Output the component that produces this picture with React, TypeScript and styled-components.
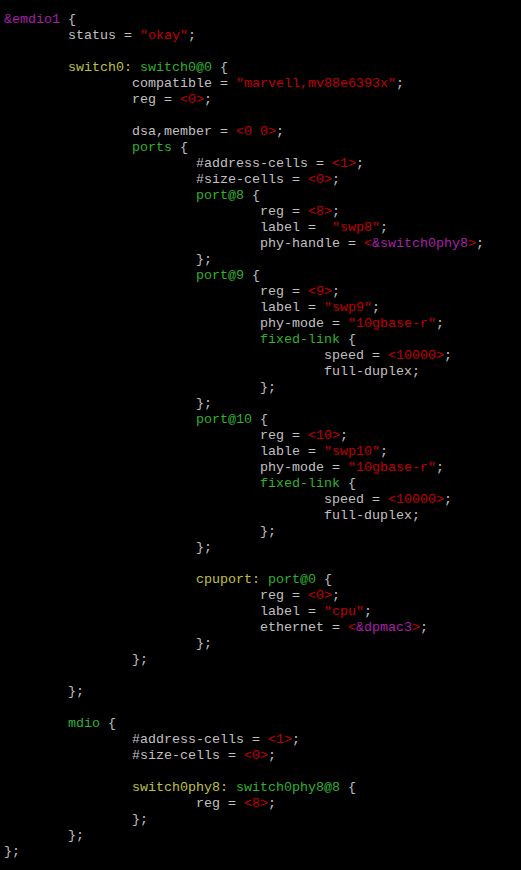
import React from "react";
import styled, { createGlobalStyle } from "styled-components";

const Global = createGlobalStyle`
  html, body {
    margin: 0;
    padding: 0;
    background: #000000;
  }
  #root {
    min-height: 870px;
    background: #000000;
  }
`;

const Screen = styled.div`
  box-sizing: border-box;
  width: 521px;
  min-height: 870px;
  padding: 12px 0 0 4px;
  background: #000000;
  color: #c0c0c0;
  font-family: "Liberation Mono", "Courier New", monospace;
  font-size: 13.33px;
  line-height: 16px;
`;

const Line = styled.div`
  height: 16px;
  white-space: pre;
  tab-size: 8;
  -moz-tab-size: 8;
`;

type Kind = "r" | "p" | "y" | "g";

const colors: Record<Kind, string> = {
  r: "#c00000",
  p: "#a820a8",
  y: "#c0c040",
  g: "#30b030",
};

const Token = styled.span<{ $kind: Kind }>`
  color: ${(p) => colors[p.$kind]};
`;

const source: string[] = [
  "{p|&emdio1} {",
  "\tstatus = {r|\"okay\"};",
  "",
  "\t{y|switch0:} {g|switch0@0} {",
  "\t\tcompatible = {r|\"marvell,mv88e6393x\"};",
  "\t\treg = {r|<0>};",
  "",
  "\t\tdsa,member = {r|<0 0>};",
  "\t\t{g|ports} {",
  "\t\t\t#address-cells = {r|<1>};",
  "\t\t\t#size-cells = {r|<0>};",
  "\t\t\t{g|port@8} {",
  "\t\t\t\treg = {r|<8>};",
  "\t\t\t\tlabel =  {r|\"swp8\"};",
  "\t\t\t\tphy-handle = {r|<}{p|&switch0phy8}{r|>};",
  "\t\t\t};",
  "\t\t\t{g|port@9} {",
  "\t\t\t\treg = {r|<9>};",
  "\t\t\t\tlabel = {r|\"swp9\"};",
  "\t\t\t\tphy-mode = {r|\"10gbase-r\"};",
  "\t\t\t\t{g|fixed-link} {",
  "\t\t\t\t\tspeed = {r|<10000>};",
  "\t\t\t\t\tfull-duplex;",
  "\t\t\t\t};",
  "\t\t\t};",
  "\t\t\t{g|port@10} {",
  "\t\t\t\treg = {r|<10>};",
  "\t\t\t\tlable = {r|\"swp10\"};",
  "\t\t\t\tphy-mode = {r|\"10gbase-r\"};",
  "\t\t\t\t{g|fixed-link} {",
  "\t\t\t\t\tspeed = {r|<10000>};",
  "\t\t\t\t\tfull-duplex;",
  "\t\t\t\t};",
  "\t\t\t};",
  "",
  "\t\t\t{y|cpuport:} {g|port@0} {",
  "\t\t\t\treg = {r|<0>};",
  "\t\t\t\tlabel = {r|\"cpu\"};",
  "\t\t\t\tethernet = {r|<}{p|&dpmac3}{r|>};",
  "\t\t\t};",
  "\t\t};",
  "",
  "\t};",
  "",
  "\t{g|mdio} {",
  "\t\t#address-cells = {r|<1>};",
  "\t\t#size-cells = {r|<0>};",
  "",
  "\t\t{y|switch0phy8:} {g|switch0phy8@8} {",
  "\t\t\treg = {r|<8>};",
  "\t\t};",
  "\t};",
  "};",
];

function renderLine(text: string): React.ReactNode[] {
  const out: React.ReactNode[] = [];
  const re = /\{([rpyg])\|([^}]*)\}/g;
  let last = 0;
  let m: RegExpExecArray | null;
  let i = 0;
  while ((m = re.exec(text)) !== null) {
    if (m.index > last) out.push(text.slice(last, m.index));
    out.push(
      <Token key={i++} $kind={m[1] as Kind}>
        {m[2]}
      </Token>
    );
    last = m.index + m[0].length;
  }
  if (last < text.length) out.push(text.slice(last));
  return out;
}

export default function App() {
  return (
    <>
      <Global />
      <Screen>
        {source.map((l, idx) => (
          <Line key={idx}>{renderLine(l)}</Line>
        ))}
      </Screen>
    </>
  );
}
